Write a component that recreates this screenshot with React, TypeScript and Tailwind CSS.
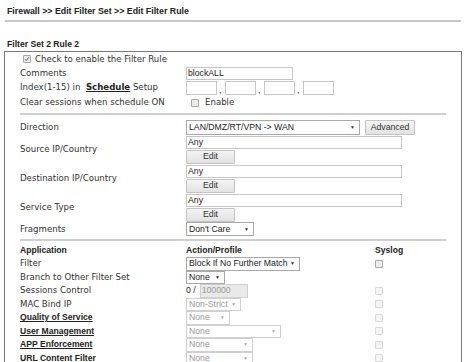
import React from "react";

const LABEL = "font-['DejaVu_Sans',sans-serif] text-[8.6px] leading-[11px] text-[#333]";
const CTRL = "font-['Liberation_Sans',Arial,sans-serif] text-[8.7px]";
const BOLD = "font-['Liberation_Sans',Arial,sans-serif] text-[8.6px] leading-[11px] font-bold text-[#222]";

function Check({ checked, disabled }: { checked?: boolean; disabled?: boolean }) {
  return (
    <span
      className={`relative block h-[8px] w-[8px] rounded-[1px] border ${
        disabled ? "border-[#d8d8d8] bg-[#f4f4f4]" : "border-[#a8a8a8] bg-[#ececec]"
      }`}
    >
      {checked && (
        <svg viewBox="0 0 8 8" className="absolute left-[0px] top-[0px] h-[6px] w-[6px]">
          <path d="M1.2 4.2 L3 6 L6.6 1.6" fill="none" stroke="#555" strokeWidth="1.3" />
        </svg>
      )}
    </span>
  );
}

function Input({ w, h = "h-[13px]", value = "", disabled }: { w: string; h?: string; value?: string; disabled?: boolean }) {
  return (
    <div
      className={`${w} ${h} ${CTRL} flex items-center border px-[1px] leading-none ${
        disabled ? "border-[#cfcfcf] bg-[#e9e9e9] text-[#999]" : "border-[#c6c6c6] bg-white text-[#222]"
      }`}
    >
      {value}
    </div>
  );
}

function Select({ w, value, disabled }: { w: string; value: string; disabled?: boolean }) {
  return (
    <div
      className={`${w} h-[13.5px] ${CTRL} flex items-center justify-between border bg-white pl-[2px] pr-[4px] leading-none ${
        disabled ? "border-[#d0d0d0] text-[#9a9a9a]" : "border-[#a9a9a9] text-[#222]"
      }`}
    >
      <span>{value}</span>
      <span className={`text-[5px] ${disabled ? "text-[#aaa]" : "text-[#333]"}`}>▼</span>
    </div>
  );
}

function Btn({ w, h = "h-[14px]", children }: { w: string; h?: string; children: React.ReactNode }) {
  return (
    <div
      className={`${w} ${h} ${CTRL} flex items-center justify-center rounded-[1px] border border-[#c4c4c4] bg-gradient-to-b from-[#f4f4f4] to-[#e2e2e2] leading-none text-[#333]`}
    >
      {children}
    </div>
  );
}

function Row({ label, h = "h-[13.5px]", children, syslog }: { label: React.ReactNode; h?: string; children?: React.ReactNode; syslog?: React.ReactNode }) {
  return (
    <div className={`flex ${h} items-center leading-none`}>
      <div className="flex w-[166px] shrink-0 items-center">{label}</div>
      <div className="flex w-[189px] shrink-0 items-center">{children}</div>
      <div className="flex items-center">{syslog}</div>
    </div>
  );
}

function IpBlock({ label }: { label: string }) {
  return (
    <div className="flex h-[29px] items-center leading-none">
      <div className={`w-[166px] shrink-0 ${LABEL}`}>{label}</div>
      <div className="flex flex-col gap-[1px]">
        <Input w="w-[216px]" value="Any" />
        <Btn w="w-[49px]">Edit</Btn>
      </div>
    </div>
  );
}

const u = `${BOLD} underline`;

export default function App() {
  return (
    <div className="h-[362px] w-[474px] overflow-hidden bg-white">
      <div className="px-[7px] pt-[5px]">
        <p className={`${BOLD} text-[8.8px] leading-[12px]`}>Firewall &gt;&gt; Edit Filter Set &gt;&gt; Edit Filter Rule</p>
      </div>
      <div className="mx-[5px] mt-[3px] w-[456px] border-t-2 border-[#c8c8c8]" />

      <p className={`${BOLD} mt-[16px] px-[7px] leading-[12px]`}>Filter Set 2 Rule 2</p>

      <div className="ml-[4px] mt-[1px] w-[458px] border border-[#7a7a7a] px-[15px] pb-[20px]">
        {/* enable / comments / schedule */}
        <div className="flex h-[14px] items-center pl-[3px] leading-none">
          <Check checked />
          <span className={`${LABEL} ml-[4px]`}>Check to enable the Filter Rule</span>
        </div>
        <Row h="h-[14px]" label={<span className={LABEL}>Comments</span>}>
          <Input w="w-[107px]" value="blockALL" />
        </Row>
        <Row
          h="h-[15px]"
          label={
            <span className={`${LABEL} whitespace-pre`}>
              Index(1-15) in  <span className="font-bold text-[#222] underline">Schedule</span> Setup
            </span>
          }
        >
          {[0, 1, 2, 3].map((i) => (
            <div key={i} className="flex items-end">
              <Input w="w-[31px]" h="h-[14px]" />
              {i < 3 && <span className={`${CTRL} w-[8px] pl-[2px] text-[#333]`}>,</span>}
            </div>
          ))}
        </Row>
        <Row h="h-[15px]" label={<span className={LABEL}>Clear sessions when schedule ON</span>}>
          <span className="ml-[5px] flex items-center">
            <Check />
          </span>
          <span className={`${LABEL} ml-[6px]`}>Enable</span>
        </Row>

        <div className="mt-[3px] border-t-2 border-[#d0d0d0]" />

        {/* direction / addresses */}
        <div className="mt-[4px] flex h-[16px] items-center leading-none">
          <div className={`w-[166px] shrink-0 ${LABEL}`}>Direction</div>
          <div className="flex h-[15px] items-center">
            <div className={`w-[174px] h-[15px] ${CTRL} flex items-center justify-between border border-[#a9a9a9] bg-white pl-[2px] pr-[4px] leading-none text-[#222]`}>
              <span>LAN/DMZ/RT/VPN -&gt; WAN</span>
              <span className="text-[5px] text-[#333]">▼</span>
            </div>
            <div className="ml-[5px]">
              <Btn w="w-[50px]" h="h-[15px]">Advanced</Btn>
            </div>
          </div>
        </div>
        <IpBlock label="Source IP/Country" />
        <IpBlock label="Destination IP/Country" />
        <IpBlock label="Service Type" />
        <Row h="h-[14px]" label={<span className={LABEL}>Fragments</span>}>
          <Select w="w-[68px]" value="Don't Care" />
        </Row>

        <div className="mt-[3px] border-t-2 border-[#d0d0d0]" />

        {/* application table */}
        <div className="mt-[2px]">
          <Row h="h-[14px]" label={<span className={BOLD}>Application</span>} syslog={<span className={BOLD}>Syslog</span>}>
            <span className={BOLD}>Action/Profile</span>
          </Row>
          <Row label={<span className={LABEL}>Filter</span>} syslog={<Check />}>
            <Select w="w-[114px]" value="Block If No Further Match" />
          </Row>
          <Row label={<span className={LABEL}>Branch to Other Filter Set</span>}>
            <Select w="w-[39px]" value="None" />
          </Row>
          <Row label={<span className={LABEL}>Sessions Control</span>} syslog={<Check disabled />}>
            <span className={`${CTRL} mr-[4px] text-[#222]`}>0 /</span>
            <Input w="w-[48px]" h="h-[14px]" value="100000" disabled />
          </Row>
          <Row label={<span className={LABEL}>MAC Bind IP</span>} syslog={<Check disabled />}>
            <Select w="w-[55px]" value="Non-Strict" disabled />
          </Row>
          <Row label={<span className={u}>Quality of Service</span>} syslog={<Check disabled />}>
            <Select w="w-[44px]" value="None" disabled />
          </Row>
          <Row label={<span className={u}>User Management</span>} syslog={<Check disabled />}>
            <Select w="w-[95px]" value="None" disabled />
          </Row>
          <Row label={<span className={u}>APP Enforcement</span>} syslog={<Check disabled />}>
            <Select w="w-[67px]" value="None" disabled />
          </Row>
          <Row label={<span className={u}>URL Content Filter</span>} syslog={<Check disabled />}>
            <Select w="w-[67px]" value="None" disabled />
          </Row>
        </div>
      </div>
    </div>
  );
}
